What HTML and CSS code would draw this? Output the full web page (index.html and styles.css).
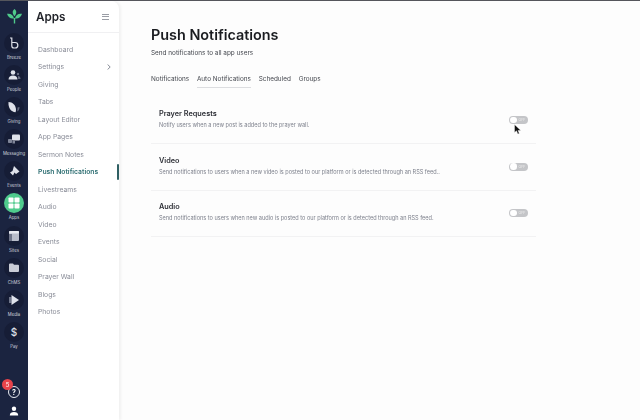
FILE: index.html
```html
<!DOCTYPE html>
<html lang="en">
<head>
<meta charset="utf-8">
<title>Push Notifications</title>
<link rel="stylesheet" href="styles.css">
</head>
<body>
<div class="app">
  <nav class="rail">
    <div class="logo">
      <svg width="15" height="15" viewBox="0 0 15 15"><path fill="#4fc98a" d="M7.500 0c2.300 1.800 2.500 4.300 0 7.200C5 4.300 5.200 1.800 7.500 0zM0 4.800c3.500-.6 6.300 1 7 4.700C3.500 10 1 8.300 0 4.800zM15 4.800c-1 3.500-3.500 5.200-7 4.700.7-3.700 3.500-5.300 7-4.700z"/><path fill="#4fc98a" d="M6.800 9h1.400v5.500H6.800z"/></svg>
    </div>
    <div class="rail-item">
      <span class="rail-icon"><svg width="12" height="12" viewBox="0 0 12 12"><path fill="none" stroke="#dfe2ea" stroke-width="1.200" d="M2 1h1.800v7.700a2.300 2.300 0 0 0 2.300 2.300h1a2.700 2.700 0 0 0 0-5.500H3.800"/></svg></span>
      <span class="rail-label">Breeze</span>
    </div>
    <div class="rail-item">
      <span class="rail-icon"><svg width="14" height="12" viewBox="0 0 14 12"><circle cx="6" cy="3.500" r="2.300" fill="#dfe2ea"/><path fill="#dfe2ea" d="M1.500 10.500c0-2.800 2-4 4.500-4s4.500 1.200 4.500 4z"/><circle cx="11" cy="5" r="1.200" fill="#666c80"/><path fill="#666c80" d="M11 10h2.500c0-1.800-1-3-2.500-3z"/></svg></span>
      <span class="rail-label">People</span>
    </div>
    <div class="rail-item">
      <span class="rail-icon"><svg width="14" height="12" viewBox="0 0 14 12"><path fill="#dfe2ea" d="M1.500 1c4 0 7.500 3 7.500 8 0 1-.2 1.700-.5 2.200C4 11 1 7 1.500 1z"/><path fill="#666c80" d="M10.500 6.500l2-.5c0 2-.8 3.700-2.200 4.500z"/></svg></span>
      <span class="rail-label">Giving</span>
    </div>
    <div class="rail-item">
      <span class="rail-icon"><svg width="14" height="12" viewBox="0 0 14 12"><rect x="5" y="1.500" width="8" height="6" rx="1" fill="#dfe2ea"/><rect x="1" y="6" width="4" height="4" rx=".8" fill="#7f8598"/><rect x="5.500" y="8" width="2.500" height="2.500" fill="#7f8598"/></svg></span>
      <span class="rail-label">Messaging</span>
    </div>
    <div class="rail-item">
      <span class="rail-icon"><svg width="13" height="13" viewBox="0 0 13 13"><path fill="#dfe2ea" d="M6 1l5.500 5.500L8 9 6.500 7.500 5 10.500 2 7.500 4.500 6z"/></svg></span>
      <span class="rail-label">Events</span>
    </div>
    <div class="rail-item">
      <span class="rail-icon rail-icon-active"><svg width="12" height="12" viewBox="0 0 12 12"><g fill="#fff"><rect x=".5" y=".5" width="5" height="5" rx=".8"/><rect x="6.500" y=".5" width="5" height="5" rx=".8"/><rect x=".5" y="6.500" width="5" height="5" rx=".8"/><rect x="6.500" y="6.500" width="5" height="5" rx=".8"/></g></svg></span>
      <span class="rail-label">Apps</span>
    </div>
    <div class="rail-item">
      <span class="rail-icon"><svg width="12" height="12" viewBox="0 0 12 12"><rect x="1" y="1" width="10" height="10" rx="1" fill="#b9bdca"/><rect x="1" y="1" width="10" height="2.500" rx="1" fill="#e8eaf0"/><rect x="1" y="4" width="3" height="7" fill="#6f7589"/></svg></span>
      <span class="rail-label">Sites</span>
    </div>
    <div class="rail-item">
      <span class="rail-icon"><svg width="12" height="11" viewBox="0 0 12 11"><path fill="#c9ccd6" d="M1 2.500a1 1 0 0 1 1-1h3l1 1.200h4a1 1 0 0 1 1 1V9a1 1 0 0 1-1 1H2a1 1 0 0 1-1-1z"/></svg></span>
      <span class="rail-label">ChMS</span>
    </div>
    <div class="rail-item">
      <span class="rail-icon"><svg width="12" height="12" viewBox="0 0 12 12"><rect x="1" y="3" width="2.500" height="6" fill="#6f7589"/><path fill="#dfe2ea" d="M3.500 1l7.500 5-7.500 5z"/></svg></span>
      <span class="rail-label">Media</span>
    </div>
    <div class="rail-item">
      <span class="rail-icon rail-icon-text">$</span>
      <span class="rail-label">Pay</span>
    </div>
    <div class="rail-bottom">
      <div class="help">
        <span class="help-ring">?</span>
        <span class="badge">5</span>
      </div>
      <svg width="10" height="10" viewBox="0 0 10 10"><circle cx="5" cy="2.800" r="2.200" fill="#fff"/><path fill="#fff" d="M.8 9.500c0-2.600 1.800-3.500 4.200-3.500s4.200.9 4.200 3.500z"/></svg>
    </div>
  </nav>

  <aside class="side">
    <header class="side-head">
      <span class="side-title">Apps</span>
      <span class="burger"><i></i><i></i><i></i></span>
    </header>
    <ul class="menu">
      <li>Dashboard</li>
      <li class="has-sub">Settings<svg width="4" height="6" viewBox="0 0 4 6"><path fill="none" stroke="#6a6f7c" stroke-width=".8" d="M.6.500L3.200 3 .6 5.500"/></svg></li>
      <li>Giving</li>
      <li>Tabs</li>
      <li>Layout Editor</li>
      <li>App Pages</li>
      <li>Sermon Notes</li>
      <li class="current">Push Notifications</li>
      <li>Livestreams</li>
      <li>Audio</li>
      <li>Video</li>
      <li>Events</li>
      <li>Social</li>
      <li>Prayer Wall</li>
      <li>Blogs</li>
      <li>Photos</li>
    </ul>
  </aside>

  <main class="main">
    <h1 class="title">Push Notifications</h1>
    <p class="subtitle">Send notifications to all app users</p>
    <div class="tabs">
      <span class="tab">Notifications</span>
      <span class="tab tab-on">Auto Notifications</span>
      <span class="tab">Scheduled</span>
      <span class="tab">Groups</span>
    </div>
    <section class="rows">
      <div class="row">
        <div class="row-text"><h2>Prayer Requests</h2><p>Notify users when a new post is added to the prayer wall.</p></div>
        <span class="toggle"><span class="knob"></span><span class="off">OFF</span></span>
      </div>
      <div class="row">
        <div class="row-text"><h2>Video</h2><p>Send notifications to users when a new video is posted to our platform or is detected through an RSS feed..</p></div>
        <span class="toggle"><span class="knob"></span><span class="off">OFF</span></span>
      </div>
      <div class="row">
        <div class="row-text"><h2>Audio</h2><p>Send notifications to users when new audio is posted to our platform or is detected through an RSS feed.</p></div>
        <span class="toggle"><span class="knob"></span><span class="off">OFF</span></span>
      </div>
    </section>
    <svg class="cursor" width="8" height="11" viewBox="0 0 8 11"><path fill="#111" stroke="#fff" stroke-width=".4" d="M.5.500v8l2-1.700 1.300 3.200 1.500-.6L4 6.500h2.800z"/></svg>
  </main>
</div>
</body>
</html>
```
FILE: styles.css
```css
* { box-sizing: border-box; }
html, body { margin: 0; height: 100%; }
body { font-family: Inter, "Liberation Sans", sans-serif; background: #fdfdfd; overflow: hidden; }
.app { display: flex; width: 640px; height: 420px; border-top: 1px solid #55565c; filter: blur(.3px); }

.rail { width: 28px; background: #1b2440; display: flex; flex-direction: column; align-items: center; flex: none; }
.logo { height: 27px; padding-top: 7px; margin-bottom: 5px; }
.rail-item { height: 32.1px; display: flex; flex-direction: column; align-items: center; }
.rail-icon { width: 20px; height: 20px; border-radius: 50%; background: #161d36; display: flex; align-items: center; justify-content: center; }
.rail-icon-active { background: #4fcb8d; }
.rail-icon-text { color: #dfe2ea; font-size: 10px; font-weight: 500; }
.rail-label { font-size: 4.300px; line-height: 7px; margin-top: 1px; color: #cfd3de; white-space: nowrap; }
.rail-bottom { margin-top: auto; display: flex; flex-direction: column; align-items: center; gap: 8px; padding-bottom: 4px; }
.help { position: relative; width: 12px; height: 12px; }
.help-ring { display: flex; width: 12px; height: 12px; border: 1px solid #e8eaf0; border-radius: 50%; align-items: center; justify-content: center; color: #fff; font-size: 7px; font-weight: 700; }
.badge { position: absolute; left: -6px; top: -7px; width: 11px; height: 11px; border-radius: 50%; background: #e8434a; color: #fff; font-size: 6px; display: flex; align-items: center; justify-content: center; }

.side { width: 91px; flex: none; background: #fff; border-top-right-radius: 8px; box-shadow: 2px 0 3px rgba(0,0,0,.05); }
.side-head { height: 32px; padding: 0 10px 0 8px; display: flex; align-items: center; justify-content: space-between; border-bottom: 1px solid #f0f0f2; }
.side-title { font-size: 11.700px; font-weight: 600; color: #23252b; }
.burger { display: flex; flex-direction: column; gap: 1.500px; width: 7px; }
.burger i { display: block; height: 1px; background: #9a9da5; }
.menu { list-style: none; margin: 0; padding: 7.500px 0 0 10px; }
.menu li { height: 17.500px; display: flex; align-items: center; justify-content: space-between; padding-right: 8px; font-size: 6.800px; color: #8a8d98; position: relative; }
.menu .current { color: #2f6f73; font-weight: 600; }
.menu .current::after { content: ""; position: absolute; right: 0; top: 1px; width: 2px; height: 16px; border-radius: 1px; background: #2f5f63; }

.main { flex: 1; padding: 24px 0 0 32px; position: relative; }
.title { margin: 0; font-size: 14.400px; line-height: 20px; font-weight: 600; color: #1a1c20; }
.subtitle { margin: 4px 0 0; font-size: 6.400px; line-height: 9px; color: #45484f; }
.tabs { display: flex; gap: 7.800px; margin-top: 17px; }
.tab { font-size: 6.400px; line-height: 9px; padding-bottom: 3px; color: #45484f; border-bottom: 1px solid transparent; }
.tab-on { border-bottom-color: #dcdde0; }
.rows { width: 385px; margin-top: 9.500px; }
.row { height: 46.500px; padding: 11.500px 8px 0; display: flex; justify-content: space-between; border-bottom: 1px solid #f2f2f3; }
.row h2 { margin: 0; font-size: 7.300px; line-height: 9px; font-weight: 600; color: #2c2e35; }
.row p { margin: 3px 0 0; font-size: 5.550px; line-height: 8px; color: #7d808c; white-space: nowrap; }
.toggle { width: 19px; height: 8px; border-radius: 4px; background: #c4c5c8; display: flex; align-items: center; padding: 0 1px; gap: 2px; margin-top: 7px; }
.knob { width: 6.500px; height: 6.500px; border-radius: 50%; background: #fff; }
.off { color: #eee; font-size: 3.500px; }
.cursor { position: absolute; left: 395px; top: 123px; }
```
